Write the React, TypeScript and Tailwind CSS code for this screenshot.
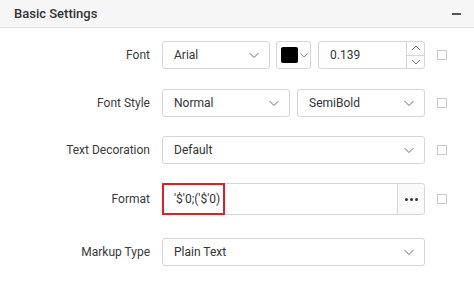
import React from "react";

const Chevron = ({ size = 12 }: { size?: number }) => (
  <svg width={size} height={size} viewBox="0 0 12 12" fill="none">
    <path d="M1.5 4 L6 8.5 L10.5 4" stroke="#6b6b6b" strokeWidth="1" />
  </svg>
);

const Check = () => <div className="w-[10px] h-[10px] border border-[#c8c8c8] bg-white shrink-0" />;

const Select = ({ value, w }: { value: string; w?: string }) => (
  <div
    className={`${w ?? "flex-1"} h-[28px] border border-[#d6d6d6] rounded-[3px] bg-white flex items-center pl-[11px] pr-[9px] justify-between`}
  >
    <span className="text-[12px] text-[#333]">{value}</span>
    <Chevron />
  </div>
);

const Label = ({ children }: { children: React.ReactNode }) => (
  <div className="w-[150px] shrink-0 text-right text-[12px] text-[#3a3a3a]">{children}</div>
);

export default function App() {
  return (
    <div className="w-[474px] h-[285px] bg-white font-['Roboto',sans-serif] overflow-hidden">
      <div className="h-[28px] bg-[#f6f6f6] border-b border-[#e0e0e0] flex items-center justify-between pl-[14px] pr-[13px]">
        <span className="text-[13px] font-medium text-[#333]">Basic Settings</span>
        <div className="w-[9px] h-[2px] bg-[#555]" />
      </div>
      <div className="flex flex-col">
        <div className="flex items-center mt-[13px] h-[28px]">
          <Label>Font</Label>
          <div className="ml-[12px] w-[263px] flex items-center">
            <Select value="Arial" w="w-[108px]" />
            <div className="ml-[6px] w-[35px] h-[28px] border border-[#d6d6d6] rounded-[3px] flex items-center pl-[4px] gap-[1px]">
              <div className="w-[17px] h-[16px] bg-black rounded-[2px]" />
              <Chevron size={10} />
            </div>
            <div className="ml-[7px] w-[107px] h-[28px] border border-[#d6d6d6] rounded-[3px] flex items-center">
              <span className="pl-[11px] flex-1 text-[12px] text-[#333]">0.139</span>
              <div className="w-[18px] h-full border-l border-[#d6d6d6] flex flex-col">
                <div className="flex-1 flex items-center justify-center border-b border-[#d6d6d6]">
                  <svg width="10" height="6" viewBox="0 0 10 6" fill="none">
                    <path d="M1 5 L5 1 L9 5" stroke="#6b6b6b" strokeWidth="1" />
                  </svg>
                </div>
                <div className="flex-1 flex items-center justify-center">
                  <svg width="10" height="6" viewBox="0 0 10 6" fill="none">
                    <path d="M1 1 L5 5 L9 1" stroke="#6b6b6b" strokeWidth="1" />
                  </svg>
                </div>
              </div>
            </div>
          </div>
          <div className="ml-[12px]"><Check /></div>
        </div>

        <div className="flex items-center mt-[20px] h-[28px]">
          <Label>Font Style</Label>
          <div className="ml-[12px] w-[263px] flex items-center">
            <Select value="Normal" w="w-[128px]" />
            <div className="ml-[7px] flex-1 flex">
              <Select value="SemiBold" />
            </div>
          </div>
          <div className="ml-[12px]"><Check /></div>
        </div>

        <div className="flex items-center mt-[19px] h-[28px]">
          <Label>Text Decoration</Label>
          <div className="ml-[12px] w-[263px] flex">
            <Select value="Default" />
          </div>
          <div className="ml-[12px]"><Check /></div>
        </div>

        <div className="flex items-center mt-[19px] h-[32px]">
          <Label>Format</Label>
          <div className="ml-[12px] w-[263px] h-[32px] flex border border-[#d6d6d6] rounded-[3px] relative">
            <div className="absolute left-[-1px] top-[-1px] w-[63px] h-[32px] border-2 border-[#e02020]" />
            <div className="flex-1 flex items-center pl-[11px] text-[12px] text-[#333]">'$'0;('$'0)</div>
            <div className="w-[27px] h-full border-l border-[#d6d6d6] bg-[#fafafa] flex items-center justify-center gap-[2px] rounded-r-[3px]">
              <div className="w-[3px] h-[3px] bg-[#333] rounded-full" />
              <div className="w-[3px] h-[3px] bg-[#333] rounded-full" />
              <div className="w-[3px] h-[3px] bg-[#333] rounded-full" />
            </div>
          </div>
          <div className="ml-[12px]"><Check /></div>
        </div>

        <div className="flex items-center mt-[23px] h-[28px]">
          <Label>Markup Type</Label>
          <div className="ml-[12px] w-[263px] flex">
            <Select value="Plain Text" />
          </div>
        </div>
      </div>
    </div>
  );
}
